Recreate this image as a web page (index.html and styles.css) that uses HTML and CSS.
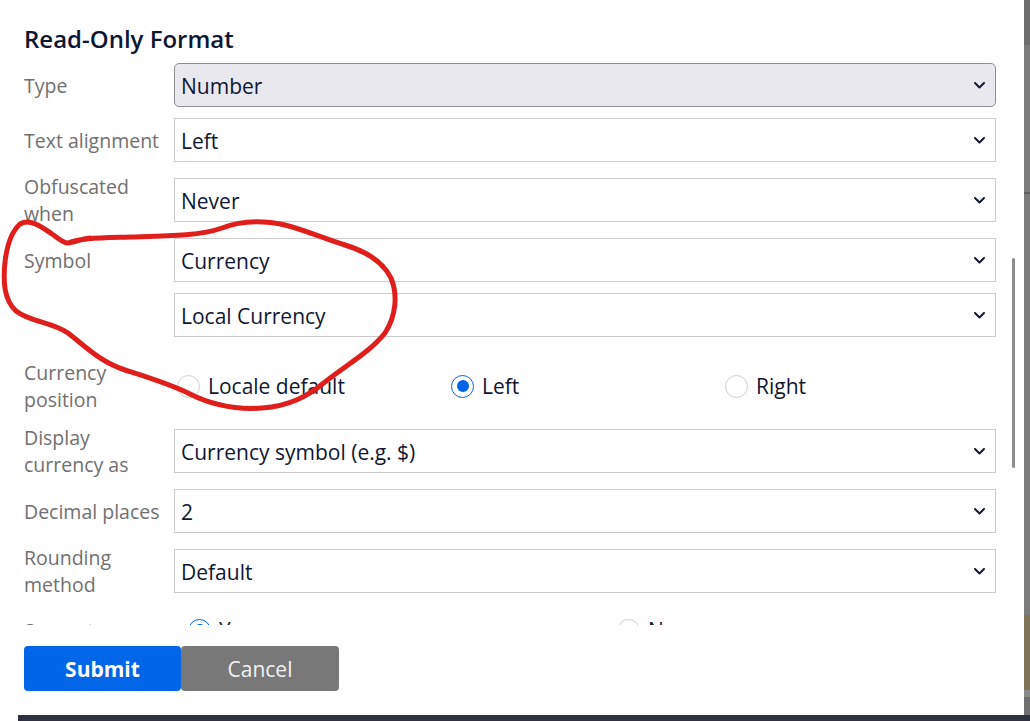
FILE: index.html
```html
<!DOCTYPE html>
<html lang="en">
<head>
    <meta charset="UTF-8">
    <meta name="viewport" content="width=device-width, initial-scale=1.0">
    <title>Read-Only Format</title>
    <link rel="stylesheet" href="styles.css">
</head>
<body>
    <div class="screen">
        <div class="top">
            <div class="modal">
                <h2 class="modal-title">Read-Only Format</h2>

                <!-- Form rows -->
                <div class="form-scroll">
                    <div class="form">
                        <span class="field-label">Type</span>
                        <div class="select select-readonly">
                            <span>Number</span>
                            <svg class="chevron" width="11" height="7" viewBox="0 0 11 7"><path d="M1 1l4.5 4.5L10 1"/></svg>
                        </div>

                        <span class="field-label">Text alignment</span>
                        <div class="select">
                            <span>Left</span>
                            <svg class="chevron" width="11" height="7" viewBox="0 0 11 7"><path d="M1 1l4.5 4.5L10 1"/></svg>
                        </div>

                        <span class="field-label">Obfuscated when</span>
                        <div class="select">
                            <span>Never</span>
                            <svg class="chevron" width="11" height="7" viewBox="0 0 11 7"><path d="M1 1l4.5 4.5L10 1"/></svg>
                        </div>

                        <span class="field-label">Symbol</span>
                        <div class="select">
                            <span>Currency</span>
                            <svg class="chevron" width="11" height="7" viewBox="0 0 11 7"><path d="M1 1l4.5 4.5L10 1"/></svg>
                        </div>

                        <span class="field-label"></span>
                        <div class="select">
                            <span>Local Currency</span>
                            <svg class="chevron" width="11" height="7" viewBox="0 0 11 7"><path d="M1 1l4.5 4.5L10 1"/></svg>
                        </div>

                        <span class="field-label field-offset">Currency position</span>
                        <div class="radio-group three field-offset">
                            <label class="radio"><span class="radio-dot"></span>Locale default</label>
                            <label class="radio"><span class="radio-dot checked"></span>Left</label>
                            <label class="radio"><span class="radio-dot"></span>Right</label>
                        </div>

                        <span class="field-label">Display currency as</span>
                        <div class="select">
                            <span>Currency symbol (e.g. $)</span>
                            <svg class="chevron" width="11" height="7" viewBox="0 0 11 7"><path d="M1 1l4.5 4.5L10 1"/></svg>
                        </div>

                        <span class="field-label">Decimal places</span>
                        <div class="select">
                            <span>2</span>
                            <svg class="chevron" width="11" height="7" viewBox="0 0 11 7"><path d="M1 1l4.5 4.5L10 1"/></svg>
                        </div>

                        <span class="field-label">Rounding method</span>
                        <div class="select">
                            <span>Default</span>
                            <svg class="chevron" width="11" height="7" viewBox="0 0 11 7"><path d="M1 1l4.5 4.5L10 1"/></svg>
                        </div>

                        <span class="field-label field-last">Separators</span>
                        <div class="radio-group two field-last">
                            <label class="radio"><span class="radio-dot checked"></span>Yes</label>
                            <label class="radio"><span class="radio-dot"></span>No</label>
                        </div>
                    </div>
                </div>

                <div class="modal-footer">
                    <button class="btn btn-submit">Submit</button>
                    <button class="btn btn-cancel">Cancel</button>
                </div>

                <div class="scroll-thumb"></div>

                <!-- red hand-drawn markup on the screenshot -->
                <svg class="markup" width="1024" height="715" viewBox="0 0 1024 715">
                    <path d="M68 243 C80 238 100 238 130 237 C165 236 200 236 222 228 C240 221 262 220 285 225 C305 230 325 239 345 245 C365 251 383 262 391 278 C398 295 396 316 385 333 C370 352 345 366 325 382 C308 396 290 406 262 408 C235 410 210 404 190 394 C170 384 150 378 125 370 C100 362 85 346 68 333 C52 322 30 322 16 311 C4 300 3 282 5 262 C7 245 11 232 20 224 C30 218 42 227 52 234 C58 238 63 243 68 243 C74 243 80 239 90 238"/>
                </svg>
            </div>
            <div class="backdrop-edge"></div>
        </div>
        <div class="taskbar"></div>
    </div>
</body>
</html>
```

FILE: styles.css
```css
body {
    margin: 0;
    padding: 0;
    font-family: "Open Sans", "Noto Sans", sans-serif;
    background-color: #fff;
}
.screen {
    width: 1030px;
    height: 721px;
    display: flex;
    flex-direction: column;
    overflow: hidden;
}
.top {
    display: flex;
    height: 715px;
}
.modal {
    position: relative;
    width: 1024px;
    box-sizing: border-box;
    padding: 0 28px 0 24px;
    background: #fff;
    display: flex;
    flex-direction: column;
}
.modal-title {
    margin: 23px 0 0;
    font-size: 24px;
    font-weight: 600;
    line-height: 31px;
    color: #0d1733;
}
.form-scroll {
    margin-top: 9px;
    height: 562px;
    overflow: hidden;
}
.form {
    display: grid;
    grid-template-columns: 150px 822px;
    row-gap: 11px;
    align-items: center;
}
.field-label {
    font-size: 19.5px;
    line-height: 27px;
    color: #707070;
    padding-right: 8px;
}
.field-offset {
    margin-top: 11px;
}
.field-last {
    margin-top: -1px;
}
.select {
    height: 44px;
    box-sizing: border-box;
    border: 1px solid #cbcbcb;
    background: #fff;
    padding: 2px 10px 0 6px;
    display: flex;
    align-items: center;
    justify-content: space-between;
    font-size: 21px;
    color: #0f1733;
}
.select-readonly {
    background: #e8e8ee;
    border-color: #8e8e97;
    border-radius: 5px;
}
.chevron {
    fill: none;
    stroke: #141a35;
    stroke-width: 2;
    stroke-linecap: round;
    stroke-linejoin: round;
    margin-top: -2px;
}
.radio-group {
    display: grid;
    align-items: center;
    min-height: 44px;
}
.radio-group.three {
    grid-template-columns: 1fr 1fr 1fr;
}
.radio-group.two {
    grid-template-columns: 1fr 1fr;
}
.radio {
    display: flex;
    align-items: center;
    gap: 8px;
    margin-left: 3px;
    font-size: 21px;
    color: #0f1733;
}
.radio-group.two .radio {
    margin-left: 14px;
}
.radio-group.two .radio + .radio {
    margin-left: 32px;
}
.radio-dot {
    width: 23px;
    height: 23px;
    box-sizing: border-box;
    border: 1.5px solid #cfcfcf;
    border-radius: 50%;
    background: #fff;
    display: flex;
    align-items: center;
    justify-content: center;
}
.radio-dot.checked {
    border-color: #0066e6;
}
.radio-dot.checked::after {
    content: "";
    width: 12px;
    height: 12px;
    border-radius: 50%;
    background: #0066e6;
}
.modal-footer {
    display: flex;
    padding-top: 21px;
}
.btn {
    height: 45px;
    border: none;
    border-radius: 4px;
    font-family: "Open Sans", "Noto Sans", sans-serif;
    font-size: 21px;
    cursor: pointer;
}
.btn-submit {
    width: 157px;
    background-color: #0065e6;
    color: #fff;
    font-weight: 700;
}
.btn-cancel {
    width: 158px;
    background-color: #787878;
    color: #f2f2f2;
}
.scroll-thumb {
    position: absolute;
    left: 1012px;
    top: 258px;
    width: 3px;
    height: 210px;
    border-radius: 2px;
    background: #8d8d8d;
}
.markup {
    position: absolute;
    left: 0;
    top: 0;
    pointer-events: none;
    fill: none;
    stroke: #e01f1d;
    stroke-width: 5;
    stroke-linecap: round;
    stroke-linejoin: round;
}
.backdrop-edge {
    width: 6px;
    background: linear-gradient(to bottom,
        #6d6d6d 0, #6d6d6d 45px,
        #7a7a7a 45px, #7a7a7a 192px,
        #5f5f5f 192px, #5f5f5f 194px,
        #7b7b7b 194px, #7b7b7b 615px,
        #7f7457 615px, #7f7457 690px,
        #8a8a8a 690px, #8a8a8a 697px,
        #6f6f6f 697px);
}
.taskbar {
    height: 6px;
    margin-left: 18px;
    background: #2f3040;
}
```
